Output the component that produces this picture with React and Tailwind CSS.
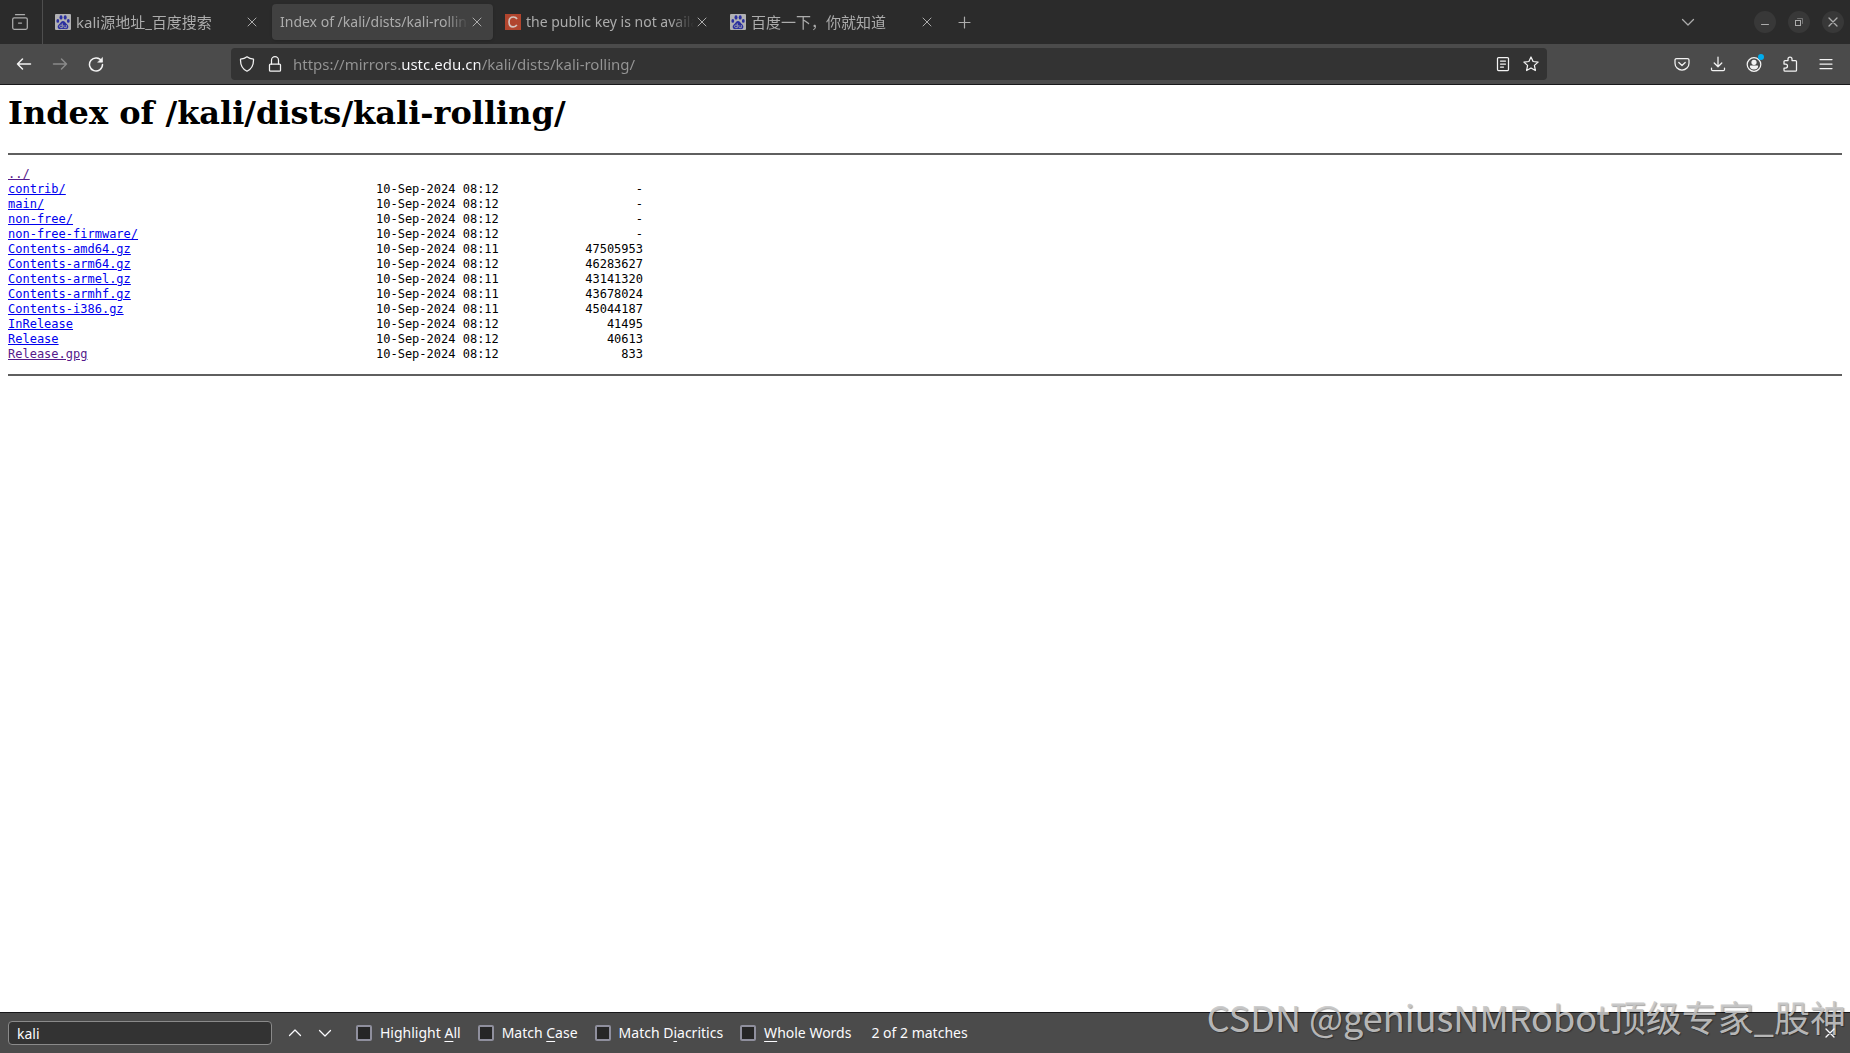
import React from "react";

const stroke = { fill: "none", stroke: "currentColor", strokeLinecap: "round", strokeLinejoin: "round" };

function Icon({ children, width = 1.25, className = "size-4" }) {
  return (
    <svg viewBox="0 0 16 16" className={className} strokeWidth={width} aria-hidden="true" {...stroke}>
      {children}
    </svg>
  );
}

function Cross({ width = 1, className }) {
  return (
    <Icon width={width} className={className}>
      <path d="M4 4l8 8M12 4l-8 8" />
    </Icon>
  );
}

function Paw() {
  return (
    <svg viewBox="0 0 16 16" className="size-4 shrink-0" aria-hidden="true">
      <rect width="16" height="16" rx="1" fill="#b1b1b3" />
      <g fill="#2a2fa0">
        <ellipse cx="6" cy="3.4" rx="1.5" ry="2.2" />
        <ellipse cx="10.2" cy="3.4" rx="1.5" ry="2.2" />
        <ellipse cx="2.8" cy="6.900" rx="1.4" ry="1.900" />
        <ellipse cx="13.300" cy="6.900" rx="1.4" ry="1.900" />
        <path d="M8 7c1.600 0 2.100 1.300 3.200 2.400 1.300 1.200 2.400 2 2.100 3.800-.300 1.700-1.800 2.200-3.200 1.900-1.400-.200-2.800-.200-4.200 0-1.500.300-3-.300-3.200-1.900-.200-1.800 1-2.600 2.200-3.800C6 8.300 6.400 7 8 7z" />
      </g>
      <g fill="none" stroke="#b1b1b3" strokeWidth=".8">
        <path d="M7.300 9.300v4.400M7.300 11.200H5.800c-1 0-1.200.500-1.200 1.200s.300 1.200 1.200 1.200h1.500M8.900 11v1.700c0 .7.300 1 1 1h1.400V11" />
      </g>
    </svg>
  );
}

function LetterIcon() {
  return (
    <svg viewBox="0 0 16 16" className="size-4 shrink-0" aria-hidden="true">
      <rect width="16" height="16" fill="#b1452e" />
      <path d="M12 5C11.200 3.500 10 3 8.400 3 5.600 3 4 5.100 4 8s1.400 4.900 4.100 4.900c1.700 0 3-.6 3.700-2" fill="none" stroke="#d4c4be" strokeWidth="1.700" />
    </svg>
  );
}

const tabs = [
  { title: "kali源地址_百度搜索", icon: <Paw />, size: "text-[15px]" },
  { title: "Index of /kali/dists/kali-rolling/", active: true, size: "text-sm" },
  { title: "the public key is not available", icon: <LetterIcon />, size: "text-sm" },
  { title: "百度一下，你就知道", icon: <Paw />, size: "text-[15px]" },
];

function Tab({ title, icon, active, size }) {
  return (
    <div className={`flex h-9 w-[221px] min-w-0 items-center rounded px-2 ${active ? "bg-[#414141] shadow" : ""}`}>
      <button className="flex h-full min-w-0 flex-1 items-center gap-[5px] overflow-hidden text-left">
        {icon}
        <span className={`min-w-0 flex-1 overflow-hidden leading-5 whitespace-nowrap [mask-image:linear-gradient(to_left,transparent,black_24px)] ${size}`}>
          {title}
        </span>
      </button>
      <button aria-label={`Close ${title}`} className="shrink-0">
        <Cross />
      </button>
    </div>
  );
}

function WindowButton({ label, children }) {
  return (
    <button aria-label={label} className="grid size-[22px] place-items-center rounded-full bg-[#383838]">
      {children}
    </button>
  );
}

function TabBar() {
  return (
    <div className="flex h-11 items-center bg-[#2b2b2b] text-[#acacac]">
      <div className="flex h-full w-[43px] shrink-0 items-center border-r border-[#4e4e4e] pl-3">
        <button aria-label="Recent browsing">
          <Icon>
            <path d="M3.500 .7h9" />
            <rect x=".7" y="3.800" width="14.600" height="11.500" rx="1.500" />
            <path d="M6.500 9h3" />
          </Icon>
        </button>
      </div>
      <div className="flex min-w-0 gap-1 pl-1">
        {tabs.map((t) => (
          <Tab key={t.title} {...t} />
        ))}
      </div>
      <button aria-label="New tab" className="ml-[13px]">
        <Icon width={1.2}>
          <path d="M8.500 3v11M3 8.500h11" />
        </Icon>
      </button>
      <button aria-label="List all tabs" className="mr-[58px] ml-auto">
        <Icon>
          <path d="M2.500 5.500L8 11l5.500-5.500" />
        </Icon>
      </button>
      <div className="flex gap-3 pr-[6px]">
        <WindowButton label="Minimize">
          <Icon width={1}><path d="M4.500 10.500h7" /></Icon>
        </WindowButton>
        <WindowButton label="Restore">
          <Icon width={1}>
            <rect x="4.500" y="6.500" width="5" height="5" strokeLinejoin="miter" />
            <path d="M6.500 4.500h5v5" opacity=".5" />
          </Icon>
        </WindowButton>
        <WindowButton label="Close window">
          <Cross width={1.3} />
        </WindowButton>
      </div>
    </div>
  );
}

function ToolButton({ label, children, className = "" }) {
  return (
    <button aria-label={label} className={className}>
      {children}
    </button>
  );
}

function NavBar() {
  return (
    <div className="flex h-10 items-center bg-[#4b4b4b] text-[#f3f3f3]">
      <div className="flex shrink-0 gap-5 pl-4">
        <ToolButton label="Back">
          <Icon width={1.5}><path d="M14.500 8h-13M6.500 3L1.500 8l5 5" /></Icon>
        </ToolButton>
        <ToolButton label="Forward" className="text-[#8a8a8a]">
          <Icon width={1.5}><path d="M1.500 8h13M9.500 3l5 5-5 5" /></Icon>
        </ToolButton>
        <ToolButton label="Reload">
          <Icon width={1.5}>
            <path d="M13.600 5.200A6.500 6.500 0 1 0 14.500 8.500" />
            <path d="M14.500 1.800v4.400H10z" fill="currentColor" strokeWidth=".6" />
          </Icon>
        </ToolButton>
      </div>
      <div className="ml-[127px] flex h-8 flex-1 items-center rounded bg-[#333333] px-2">
        <ToolButton label="Tracking protection">
          <Icon><path d="M8 .8c2 1.600 4.300 2.200 6.500 2.400.2 5.500-1.500 9.700-6.500 12C3 12.900 1.300 8.700 1.500 3.200 3.700 3 6 2.400 8 .8z" /></Icon>
        </ToolButton>
        <ToolButton label="Site security" className="ml-3">
          <Icon>
            <rect x="2.500" y="8" width="11" height="7.200" rx="1" />
            <path d="M4.500 8V4.200a3.500 3.500 0 0 1 7 0V8" />
          </Icon>
        </ToolButton>
        <input
          aria-label="Address"
          defaultValue="https://mirrors.ustc.edu.cn/kali/dists/kali-rolling/"
          className="ml-[10px] h-6 min-w-0 flex-1 bg-[linear-gradient(to_right,#959595_107px,#fbfbfe_107px,#fbfbfe_187px,#959595_187px)] bg-clip-text text-[15px] text-transparent outline-none"
        />
        <ToolButton label="Reader view">
          <Icon>
            <rect x="2.500" y="1.500" width="11" height="13" rx="1" />
            <path d="M5.500 5h5M5.500 8h5M5.500 11h3" />
          </Icon>
        </ToolButton>
        <ToolButton label="Bookmark" className="ml-3">
          <Icon><path d="M8 1l2.100 4.500 5 .6-3.700 3.300 1 5.100L8 12l-4.400 2.500 1-5.100L.9 6.100l5-.6z" /></Icon>
        </ToolButton>
      </div>
      <div className="ml-[127px] flex shrink-0 gap-5 pr-4">
        <ToolButton label="Save to Pocket">
          <Icon>
            <path d="M2.500 2.500h11a1.500 1.500 0 0 1 1.500 1.500v3.200a7 6.800 0 0 1-14 0V4a1.500 1.500 0 0 1 1.500-1.500z" />
            <path d="M4.800 6.500L8 9.500l3.200-3" />
          </Icon>
        </ToolButton>
        <ToolButton label="Downloads">
          <Icon><path d="M8 1v9.500M4.200 7L8 10.800 11.800 7M1.500 12v1.500c0 .8.400 1.200 1.200 1.200h10.600c.8 0 1.200-.4 1.200-1.200V12" /></Icon>
        </ToolButton>
        <ToolButton label="Account" className="relative">
          <Icon>
            <circle cx="8" cy="8.500" r="6.800" />
            <circle cx="8" cy="6.300" r="2" fill="currentColor" />
            <path d="M4.500 10h7c0 2-1.500 2.800-3.500 2.800S4.500 12 4.500 10z" fill="currentColor" />
          </Icon>
          <span className="absolute -top-[2px] -right-[2px] size-[6px] rounded-full bg-[#00adee]" />
        </ToolButton>
        <ToolButton label="Extensions">
          <Icon><path d="M2 7V5.500c0-.6.400-1 1-1h3V3a2 2 0 0 1 4 0v1.500h3.500c.6 0 1 .4 1 1v8.700c0 .6-.4 1-1 1H3c-.6 0-1-.4-1-1V12h1.500a2 2 0 0 0 0-4H2z" /></Icon>
        </ToolButton>
        <ToolButton label="Menu">
          <Icon><path d="M2 3.500h12M2 8h12M2 12.500h12" /></Icon>
        </ToolButton>
      </div>
    </div>
  );
}

const files = [
  ["contrib/", "10-Sep-2024 08:12", "-"],
  ["main/", "10-Sep-2024 08:12", "-"],
  ["non-free/", "10-Sep-2024 08:12", "-"],
  ["non-free-firmware/", "10-Sep-2024 08:12", "-"],
  ["Contents-amd64.gz", "10-Sep-2024 08:11", "47505953"],
  ["Contents-arm64.gz", "10-Sep-2024 08:12", "46283627"],
  ["Contents-armel.gz", "10-Sep-2024 08:11", "43141320"],
  ["Contents-armhf.gz", "10-Sep-2024 08:11", "43678024"],
  ["Contents-i386.gz", "10-Sep-2024 08:11", "45044187"],
  ["InRelease", "10-Sep-2024 08:12", "41495"],
  ["Release", "10-Sep-2024 08:12", "40613"],
  ["Release.gpg", "10-Sep-2024 08:12", "833"],
];

function Listing() {
  return (
    <main className="flex-1 bg-white px-2 text-black">
      <h1 className="pt-[9px] pb-5 font-['DejaVu_Serif',serif] text-[32px] leading-[39px] font-bold">
        Index of /kali/dists/kali-rolling/
      </h1>
      <hr className="border-t-2 border-[#5f5f5f]" />
      <table className="mt-3 mb-3 font-['DejaVu_Sans_Mono',monospace] text-xs leading-[15px]">
        <tbody>
          <tr>
            <td className="w-[368px] p-0"><a href="#up" className="text-[#551a8b] underline">../</a></td>
            <td className="w-[147px] p-0" />
            <td className="w-[120px] p-0" />
          </tr>
          {files.map(([name, date, size]) => (
            <tr key={name}>
              <td className="p-0">
                <a href={`#${name}`} className={`underline ${name === "Release.gpg" ? "text-[#551a8b]" : "text-[#0000ee]"}`}>
                  {name}
                </a>
              </td>
              <td className="p-0">{date}</td>
              <td className="p-0 text-right">{size}</td>
            </tr>
          ))}
        </tbody>
      </table>
      <hr className="border-t-2 border-[#5f5f5f]" />
    </main>
  );
}

function Check({ children }) {
  return (
    <label className="flex shrink-0 items-center gap-2">
      <input type="checkbox" className="size-4 appearance-none rounded-xs border-2 border-[#8f8f9d] bg-[#262626]" />
      <span>{children}</span>
    </label>
  );
}

function Key({ children }) {
  return <span className="underline underline-offset-[3px]">{children}</span>;
}

function FindBar() {
  return (
    <div className="relative flex h-[41px] items-center border-t border-[#18181a] bg-[#4b4b4b] pr-3 pl-2 text-[#fbfbfe]">
      <input aria-label="Find in page" defaultValue="kali" className="h-6 w-[264px] rounded border border-[#8a8a8a] bg-[#333333] px-2 outline-none" />
      <button aria-label="Previous match" className="ml-[15px]">
        <Icon><path d="M2.500 10.500L8 5l5.500 5.500" /></Icon>
      </button>
      <button aria-label="Next match" className="ml-[14px]">
        <Icon><path d="M2.500 5.500L8 11l5.500-5.500" /></Icon>
      </button>
      <div className="ml-[23px] flex gap-[17px]">
        <Check>Highlight <Key>A</Key>ll</Check>
        <Check>Match <Key>C</Key>ase</Check>
        <Check>Match D<Key>i</Key>acritics</Check>
        <Check><Key>W</Key>hole Words</Check>
      </div>
      <span className="ml-5">2 of 2 matches</span>
      <button aria-label="Close find bar" className="relative z-10 ml-auto">
        <Cross width={1.3} />
      </button>
      <span className="pointer-events-none absolute right-1 bottom-[13px] font-['Noto_Sans_CJK_SC',sans-serif] text-[36px] leading-[48px] whitespace-nowrap text-[#c8c8c8]/90 [text-shadow:1px_1px_1px_rgba(0,0,0,0.35)]">
        CSDN @geniusNMRobot顶级专家_股神
      </span>
    </div>
  );
}

export default function App() {
  return (
    <div className="flex min-h-screen flex-col font-['Noto_Sans','Noto_Sans_CJK_SC',sans-serif] text-sm leading-5">
      <TabBar />
      <NavBar />
      <div className="h-px bg-[#18181a]" />
      <Listing />
      <FindBar />
    </div>
  );
}
